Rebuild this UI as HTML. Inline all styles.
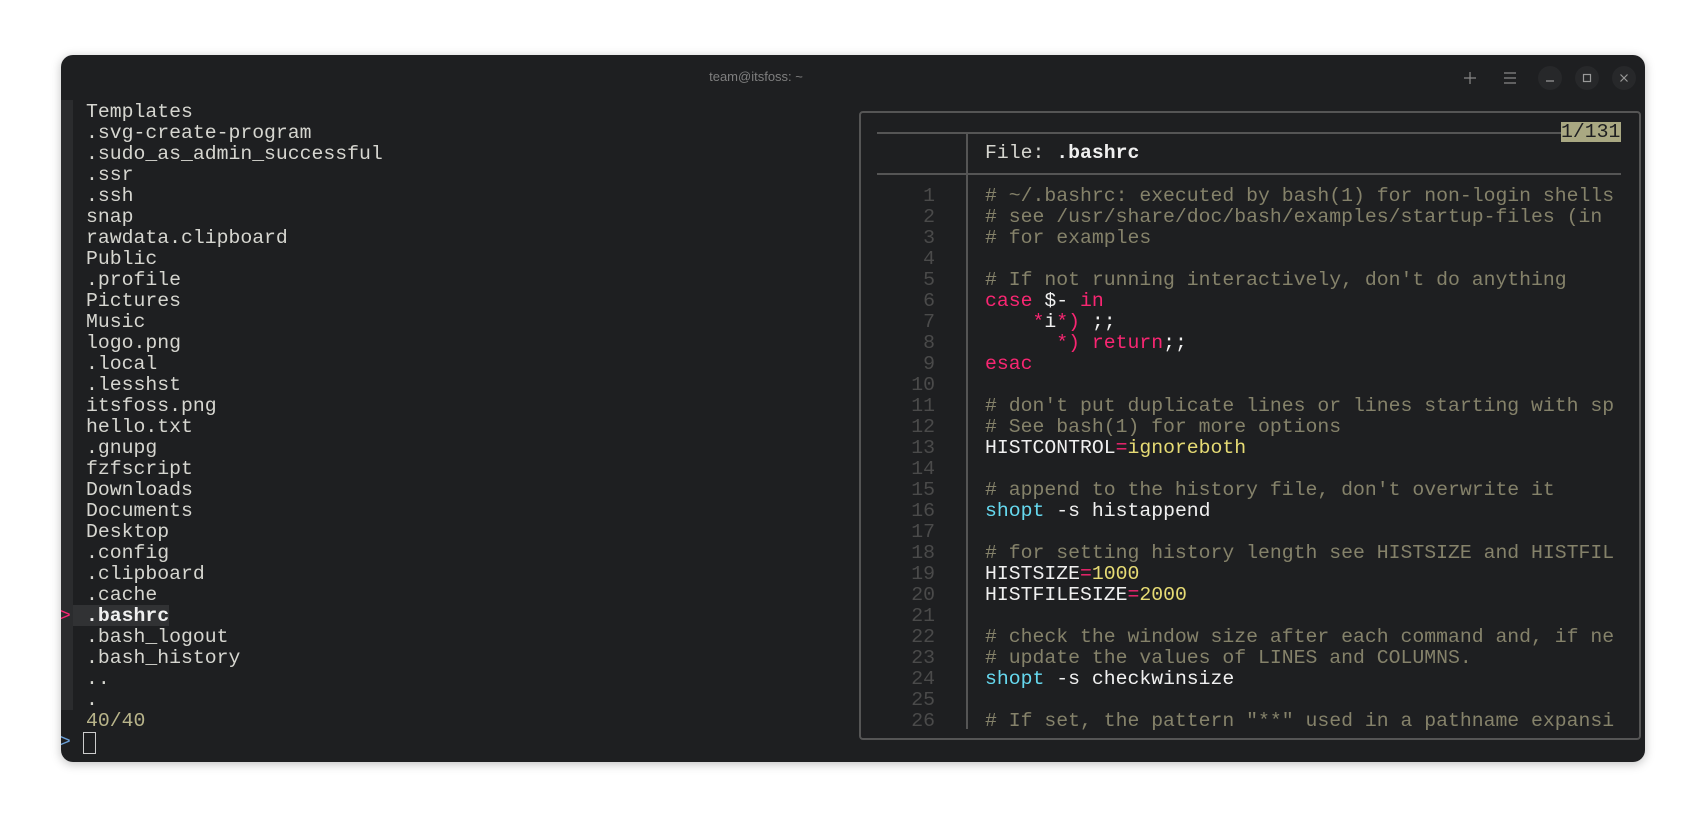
<!DOCTYPE html>
<html><head><meta charset="utf-8"><style>
body{margin:0;width:1707px;height:829px;background:#fff;position:relative;overflow:hidden;font-family:"Liberation Mono",monospace;}
.win{position:absolute;left:61px;top:55px;width:1584px;height:707px;background:#1e1f21;border-radius:12px;box-shadow:0 2px 10px rgba(0,0,0,.25);overflow:hidden}
.title{position:absolute;left:645px;width:100px;top:14px;text-align:center;color:#7f7f7f;font:13px "Liberation Sans",sans-serif;white-space:nowrap}
.t{position:absolute;font-size:19.8px;line-height:21px;white-space:pre;color:#d6d6d0}
.gut{position:absolute;left:0;top:45px;width:12px;height:610px;background:#2b2c2e}
.btn{position:absolute;top:11px;width:24px;height:24px;border-radius:50%;background:#27282a}
.panel{position:absolute;left:798px;top:56px;width:782px;height:629px;border:2px solid #555;border-radius:4px;box-sizing:border-box}
.c{color:#85826a}.k{color:#f92672}.y{color:#e6db74}.b{color:#66d9ef}.w{color:#f0f0f0}.n{color:#4a4a4a}
</style></head><body>
<div class="win">
<div class="title">team@itsfoss: ~</div>
<svg style="position:absolute;left:1401px;top:15px" width="16" height="16"><path d="M8 2v12M2 8h12" stroke="#888" stroke-width="1.2"/></svg>
<svg style="position:absolute;left:1441px;top:16px" width="16" height="14"><path d="M2 2h12M2 7h12M2 12h12" stroke="#888" stroke-width="1.2"/></svg>
<div class="btn" style="left:1477px"><svg width="24" height="24"><path d="M8 15h8" stroke="#999" stroke-width="1.2"/></svg></div>
<div class="btn" style="left:1514px"><svg width="24" height="24"><rect x="8.5" y="8.5" width="7" height="7" fill="none" stroke="#999" stroke-width="1.2"/></svg></div>
<div class="btn" style="left:1551px"><svg width="24" height="24"><path d="M8.5 8.5l7 7M15.5 8.5l-7 7" stroke="#999" stroke-width="1.2"/></svg></div>
<div class="gut"></div>
<div style="position:absolute;left:12px;top:550px;width:96px;height:21px;background:#313234"></div>
<div class="t" style="left:25px;top:46.5px">Templates
.svg-create-program
.sudo_as_admin_successful
.ssr
.ssh
snap
rawdata.clipboard
Public
.profile
Pictures
Music
logo.png
.local
.lesshst
itsfoss.png
hello.txt
.gnupg
fzfscript
Downloads
Documents
Desktop
.config
.clipboard
.cache
<b class="w">.bashrc</b>
.bash_logout
.bash_history
..
.
<span class="y" style="color:#b8b48a">40/40</span></div>
<div class="t k" style="left:-2px;top:550.5px">&gt;</div>
<div class="t" style="left:-2px;top:677px;color:#6a9fd8">&gt;</div>
<div style="position:absolute;left:22px;top:677px;width:11px;height:20px;border:1.5px solid #ccc"></div>
<div class="panel"></div>
<div style="position:absolute;left:816px;top:77px;width:744px;height:2px;background:#555"></div>
<div style="position:absolute;left:816px;top:118px;width:744px;height:2px;background:#555"></div>
<div style="position:absolute;left:905px;top:77px;width:2px;height:597px;background:#555"></div>
<div class="t" style="left:1500px;top:67px;width:60px;height:20px;background:#a9a882;color:#1e1f21;line-height:21px">1/131</div>
<div class="t" style="left:924px;top:87.5px">File: <b class="w">.bashrc</b></div>
<div class="t n" style="left:830px;top:131px;width:44px;text-align:right">1
2
3
4
5
6
7
8
9
10
11
12
13
14
15
16
17
18
19
20
21
22
23
24
25
26</div>
<div class="t" style="left:924px;top:131px"><span class="c"># ~/.bashrc: executed by bash(1) for non-login shells
# see /usr/share/doc/bash/examples/startup-files (in
# for examples</span>

<span class="c"># If not running interactively, don't do anything</span>
<span class="k">case</span> <span class="w">$-</span> <span class="k">in</span>
    <span class="k">*</span><span class="w">i</span><span class="k">*)</span> <span class="w">;;</span>
      <span class="k">*) return</span><span class="w">;;</span>
<span class="k">esac</span>

<span class="c"># don't put duplicate lines or lines starting with sp
# See bash(1) for more options</span>
<span class="w">HISTCONTROL</span><span class="k">=</span><span class="y">ignoreboth</span>

<span class="c"># append to the history file, don't overwrite it</span>
<span class="b">shopt</span> <span class="w">-s histappend</span>

<span class="c"># for setting history length see HISTSIZE and HISTFIL</span>
<span class="w">HISTSIZE</span><span class="k">=</span><span class="y">1000</span>
<span class="w">HISTFILESIZE</span><span class="k">=</span><span class="y">2000</span>

<span class="c"># check the window size after each command and, if ne
# update the values of LINES and COLUMNS.</span>
<span class="b">shopt</span> <span class="w">-s checkwinsize</span>

<span class="c"># If set, the pattern "**" used in a pathname expansi</span></div>
</div>
</body></html>
